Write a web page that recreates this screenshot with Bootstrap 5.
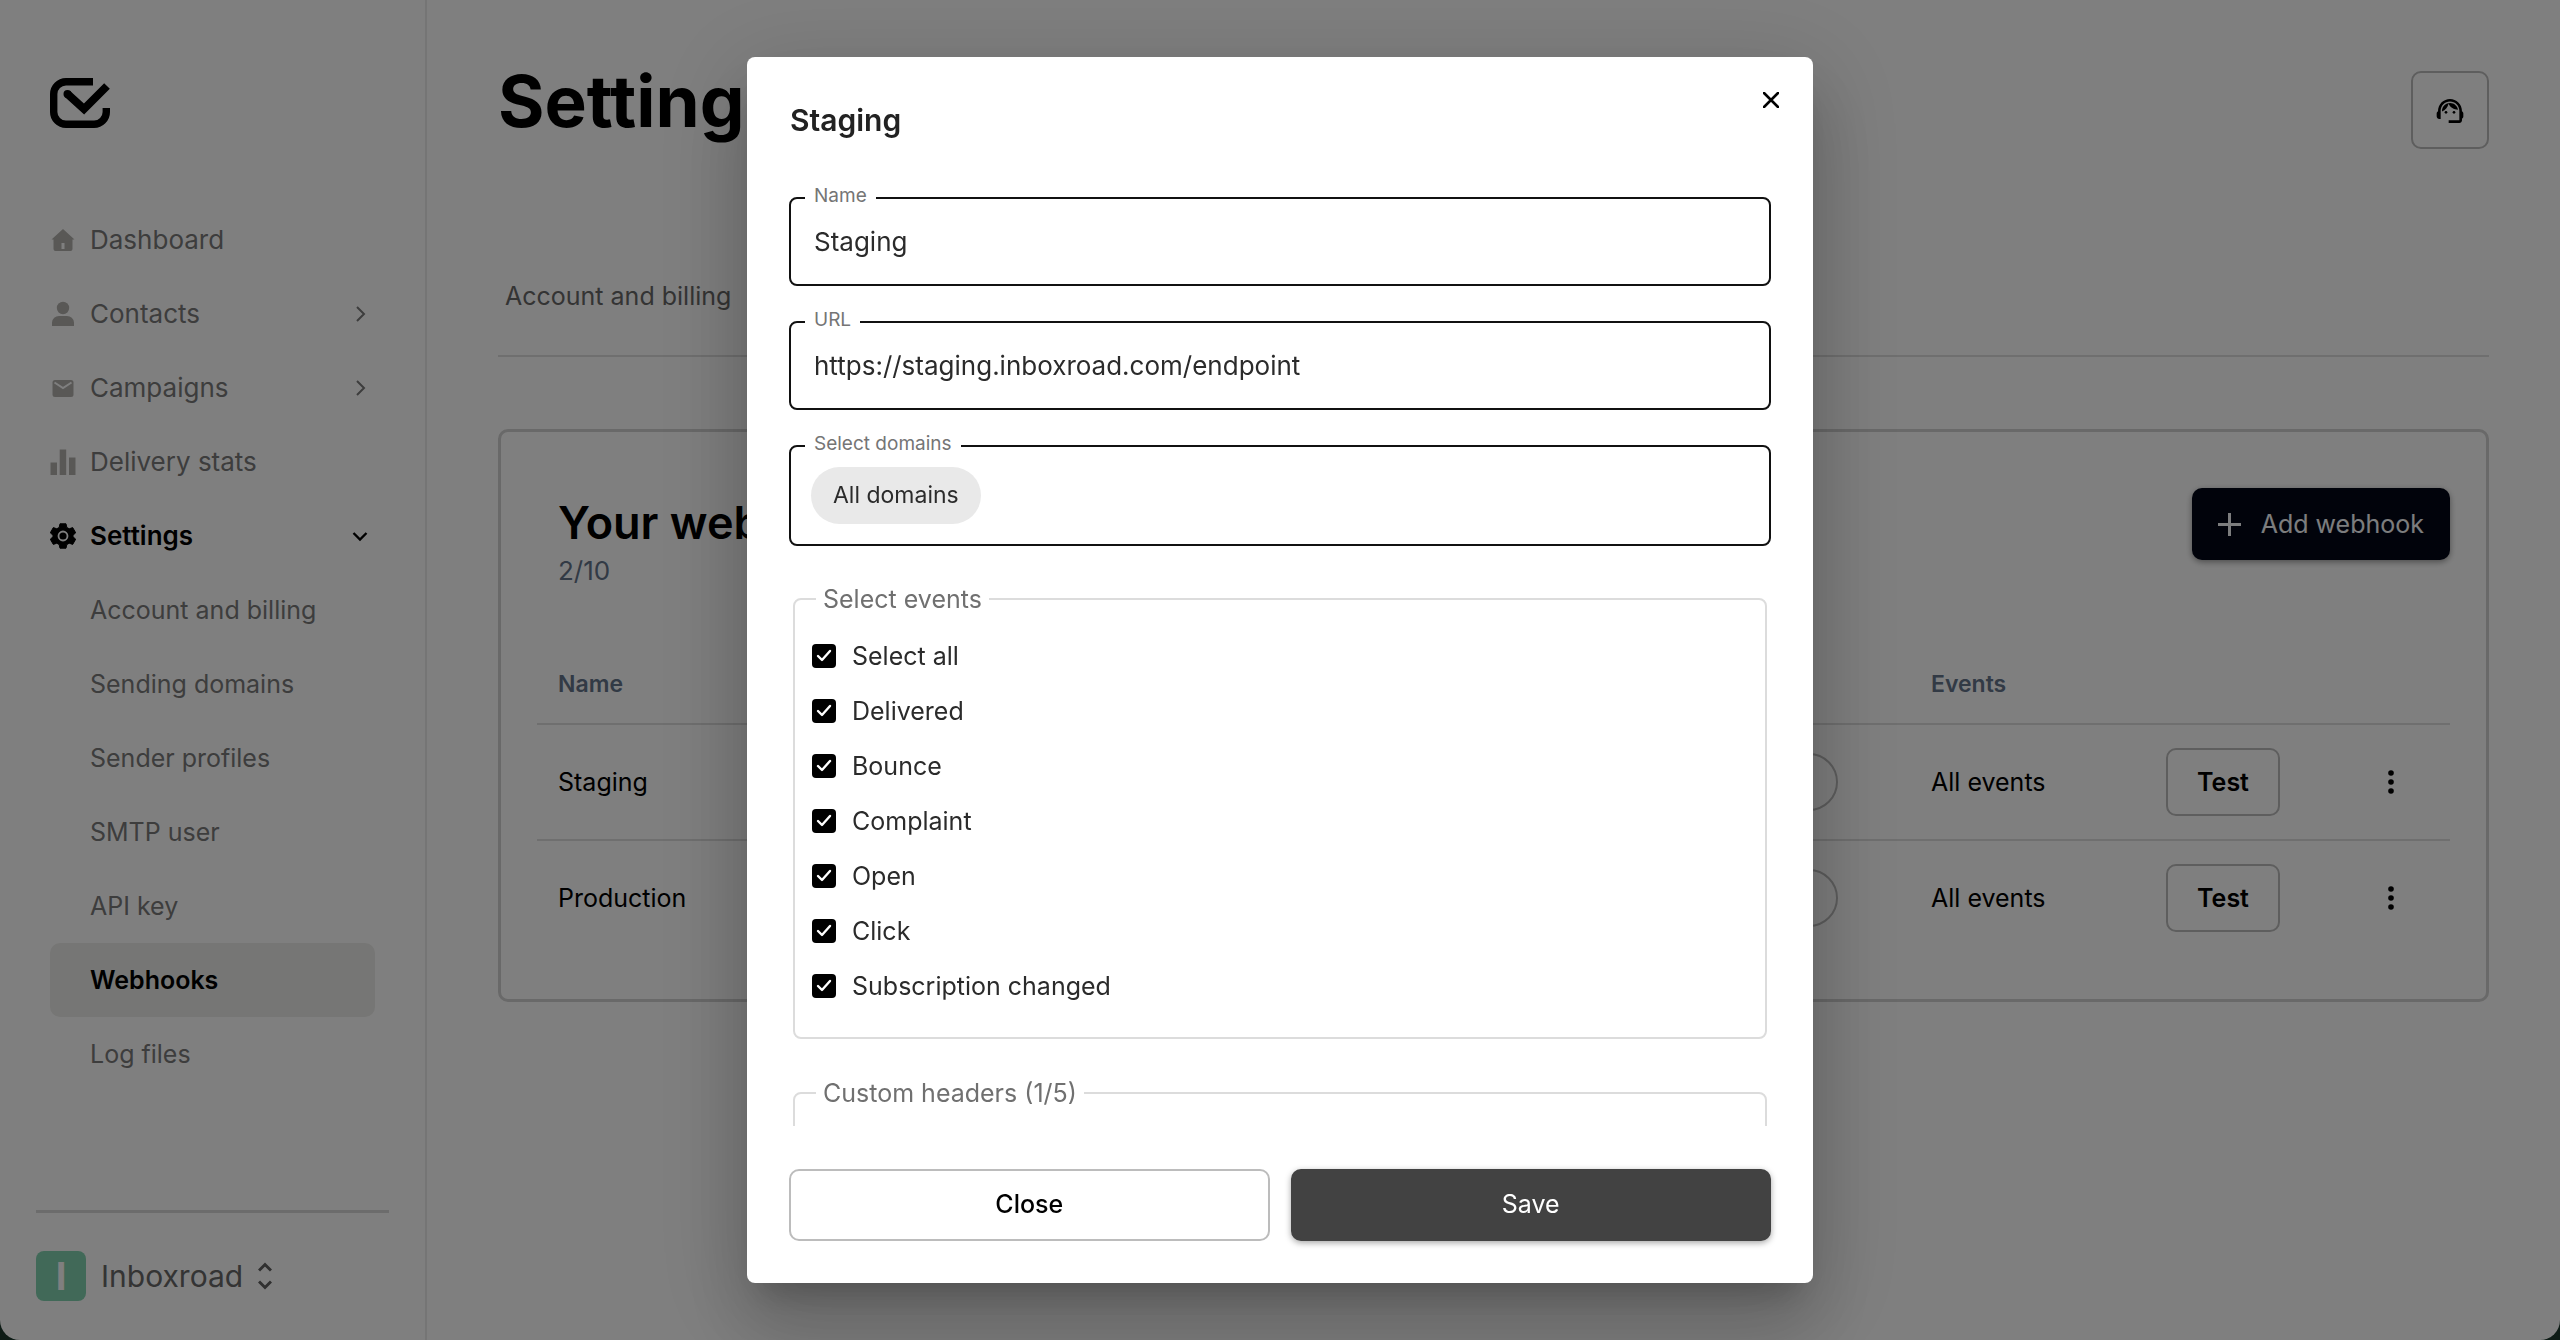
<!DOCTYPE html>
<html lang="en">
<head>
<meta charset="utf-8">
<meta name="viewport" content="width=device-width, initial-scale=1">
<title>Settings – Webhooks</title>
<link href="https://cdn.jsdelivr.net/npm/bootstrap@5.3.0/dist/css/bootstrap.min.css" rel="stylesheet">
<style>
  :root { --line: #dedede; --muted: #7a7a7a; --slate: #64748b; }
  body { font-family: Inter, "Liberation Sans", sans-serif; font-size: 25px; line-height: 32px; color: #000; background: #1c382c; }
  a { color: inherit; text-decoration: none; }
  .app-shell { background: #fff; border-radius: 0 0 20px 20px; overflow: hidden; }

  /* sidebar */
  .side-bar { width: 427px; border-right: 2px solid #ebebeb; padding: 78px 36px 39px; }
  .brand-link { margin: 0 14px 75px; line-height: 0; }
  .side-nav { margin: 0 14px; }
  .side-nav a { height: 74px; border-radius: 10px; color: var(--muted); padding-right: 7px; font-size: 26px; }
  .side-nav .ico { width: 26px; margin-right: 14px; color: #b2b1ad; flex: none; }
  .side-nav .sub-item { padding-left: 40px; font-size: 25px; }
  .side-nav .is-open { color: #000; font-weight: 600; }
  .side-nav .is-open .ico { color: #000; }
  .side-nav .sub-item.is-current { background: #ededea; color: #000; font-weight: 600; }
  .account-switch { border: 0; border-top: 3px solid #d8d8d8; padding: 38px 0 0; background: none; color: #686868; font-size: 30px; line-height: 50px; gap: 15px; }
  .avatar-tile { width: 50px; height: 50px; border-radius: 8px; background: #82d2b0; color: #fff; font-size: 38px; font-weight: 700; text-align: center; }

  /* page */
  .page-area { padding: 71px 71px 60px; }
  .page-title { font-size: 71px; line-height: 60px; font-weight: 700; margin: 0; }
  .help-btn { width: 78px; height: 78px; border: 2px solid #bcbcbc; border-radius: 10px; background: none; padding: 0; color: #000; }
  .tab-row { margin-top: 91px; height: 117px; border-bottom: 2px solid var(--line); padding: 40px 7px 0; color: #686868; gap: 40px; white-space: nowrap; }
  .hook-card { margin-top: 72px; border: 3px solid #d2d2d2; border-radius: 10px; padding: 56px 36px 42px; }
  .hook-head { margin-left: 21px; }
  .hook-title { font-size: 45px; line-height: 70px; font-weight: 600; margin: 0; }
  .hook-count { font-size: 26px; line-height: 26px; color: var(--slate); margin: 0; }
  .add-btn { height: 72px; border: 0; border-radius: 10px; background: #020617; color: #f8fafc; padding: 0 26px; gap: 20px; box-shadow: 0 2px 6px rgba(0,0,0,.4); }
  .hook-table { margin-top: 61px; width: 100%; table-layout: fixed; }
  .hook-table th { height: 79px; padding: 0 21px; font-size: 23px; font-weight: 600; color: var(--slate); border-bottom: 2px solid var(--line); }
  .hook-table td { height: 116px; padding: 0 21px; border-bottom: 2px solid var(--line); }
  .hook-table tr:last-child td { border-bottom-color: transparent; }
  .col-domain { width: 273px; } .col-event { width: 235px; } .col-test { width: 204px; } .col-more { width: 101px; }
  .pill { display: inline-block; border: 2px solid #bcbcbc; border-radius: 29px; padding: 11px 25px; font-size: 23px; white-space: nowrap; }
  .test-btn { width: 114px; height: 68px; border: 2px solid #bcbcbc; border-radius: 10px; background: none; font-weight: 600; color: #000; padding: 0; }
  .more-btn { display: block; border: 0; background: none; padding: 0; width: 42px; line-height: 0; }

  /* dialog */
  .modal-backdrop.show { opacity: .5; }
  .hook-modal { max-width: 1066px; margin: 57px auto; height: calc(100vh - 114px); }
  .hook-modal .modal-content { height: 100%; border: 0; border-radius: 8px; color: #2b2b2b;
    box-shadow: 0 22px 30px -14px rgba(0,0,0,.2), 0 48px 76px 6px rgba(0,0,0,.14), 0 18px 92px 16px rgba(0,0,0,.12); }
  .hook-modal .modal-header { border: 0; padding: 28px 27px 42px 43px; align-items: flex-start; }
  .hook-modal .modal-title { font-size: 30px; line-height: 40px; font-weight: 600; padding-top: 15px; color: #222; }
  .x-btn { border: 0; background: none; padding: 7px; line-height: 0; }
  .hook-modal .modal-body { padding: 15px 42px 0; overflow: hidden; }
  .out-field { position: relative; margin-bottom: 35px; }
  .out-field label { position: absolute; left: 16px; top: -14px; padding: 0 9px; background: #fff; font-size: 19px; line-height: 26px; color: #757575; z-index: 1; }
  .out-field .form-control { height: 89px; border: 2px solid #111; border-radius: 8px; padding: 0 23px; font-size: 26px; color: #2b2b2b; background: #fff; }
  .out-field .domain-box { height: 101px; padding: 20px; line-height: 57px; }
  .domain-chip { display: block; appearance: none; border: 0; border-radius: 29px; height: 57px; padding: 0 22px; background: #e9e9e9; font-size: 23px; color: #2b2b2b; }
  .out-group { border: 2px solid #dcdcdc; border-radius: 8px; margin: 0 4px 36px; padding: 11px 17px 24px; }
  .out-group legend { float: none; width: auto; margin: 0 0 0 4px; padding: 0 7px; font-size: 25px; line-height: 36px; color: #707070; }
  .tick-row { height: 55px; gap: 16px; }
  .tick-row .form-check-input { width: 24px; height: 24px; margin: 0; border: 0; border-radius: 4px; flex: none; }
  .tick-row .form-check-input:checked { background: #000 url("data:image/svg+xml,%3Csvg xmlns='http://www.w3.org/2000/svg' viewBox='0 0 24 24'%3E%3Cpath d='M6 12l4 4 8-9' fill='none' stroke='%23fff' stroke-width='2.4' stroke-linecap='round' stroke-linejoin='round'/%3E%3C/svg%3E") center / 24px no-repeat; }
  .hook-modal .modal-footer { border: 0; padding: 43px 42px 42px; gap: 21px; }
  .foot-btn { flex: 1 1 0; height: 72px; margin: 0; border-radius: 10px; font-size: 25px; padding: 0; }
  .foot-close, .foot-close:hover { border: 2px solid #bcbcbc; background: #fff; color: #000; font-weight: 500; }
  .foot-save, .foot-save:hover { border: 2px solid #424242; background: #424242; color: #fff; box-shadow: 0 2px 6px rgba(0,0,0,.35); }
</style>
</head>
<body>
<div class="app-shell d-flex min-vh-100">
  <aside class="side-bar d-flex flex-column flex-shrink-0">
    <a class="brand-link" href="#" aria-label="Home">
      <svg width="60" height="50" viewBox="0 0 60 50" fill="none" stroke="#000"><path d="M43 3.7H16A12.300 12.300 0 0 0 3.700 16V34A12.300 12.300 0 0 0 16 46.300H44A12.300 12.300 0 0 0 56.300 34V30" stroke-width="7.400"/><path d="M17.500 16L34 31L57 8" stroke-width="8"/><circle cx="17.500" cy="16" r="4" fill="#000" stroke="none"/></svg>
    </a>
    <nav class="side-nav d-flex flex-column">
      <a class="d-flex align-items-center" href="#"><svg class="ico" height="26" viewBox="0 0 26 26" fill="currentColor"><path d="M13 2L24.500 12.500H22.500V22a2 2 0 0 1-2 2H5.500a2 2 0 0 1-2-2V12.500H1.500zM11.500 16v6h3v-6z"/></svg>Dashboard</a>
      <a class="d-flex align-items-center" href="#"><svg class="ico" height="26" viewBox="0 0 26 26" fill="currentColor"><circle cx="13" cy="7" r="6.200"/><path d="M2 25v-3.500a7 7 0 0 1 7-6.500h8a7 7 0 0 1 7 6.500V25z"/></svg>Contacts<svg class="ms-auto" width="16" height="16" viewBox="0 0 16 16" fill="none" stroke="currentColor" stroke-width="2"><path d="M5 1l7 7-7 7"/></svg></a>
      <a class="d-flex align-items-center" href="#"><svg class="ico" height="26" viewBox="0 0 26 26"><rect x="2.500" y="5" width="21" height="17" rx="2.500" fill="currentColor"/><path d="M4.500 7.500L13 13l8.500-5.500" fill="none" stroke="#fff" stroke-width="2"/></svg>Campaigns<svg class="ms-auto" width="16" height="16" viewBox="0 0 16 16" fill="none" stroke="currentColor" stroke-width="2"><path d="M5 1l7 7-7 7"/></svg></a>
      <a class="d-flex align-items-center" href="#"><svg class="ico" height="26" viewBox="0 0 26 26" fill="currentColor"><path d="M.5 13.500h6.500V26H.5zM9.700.5h6.500V26H9.700zM19 8.500h6.500V26H19z"/></svg>Delivery stats</a>
      <a class="is-open d-flex align-items-center" href="#"><svg class="ico" height="26" viewBox="0 0 26 26"><path d="M10 .8h6l.8 3.600 2.400 1.400 3.500-1.200 3 5.200-2.700 2.400v1.600l2.700 2.400-3 5.200-3.500-1.200-2.400 1.400-.8 3.600h-6l-.8-3.600-2.400-1.400-3.500 1.200-3-5.200L3 13.800v-1.600L.3 9.800l3-5.200 3.500 1.200 2.400-1.400z" fill="currentColor" stroke="currentColor" stroke-linejoin="round"/><circle cx="13" cy="13" r="4.500" fill="none" stroke="#fff" stroke-width="1.800"/></svg>Settings<svg class="ms-auto" width="16" height="16" viewBox="0 0 16 16" fill="none" stroke="currentColor" stroke-width="2.400"><path d="M1.500 5L8 11.500 14.500 5"/></svg></a>
      <a class="sub-item d-flex align-items-center" href="#">Account and billing</a>
      <a class="sub-item d-flex align-items-center" href="#">Sending domains</a>
      <a class="sub-item d-flex align-items-center" href="#">Sender profiles</a>
      <a class="sub-item d-flex align-items-center" href="#">SMTP user</a>
      <a class="sub-item d-flex align-items-center" href="#">API key</a>
      <a class="sub-item is-current d-flex align-items-center" href="#" aria-current="page">Webhooks</a>
      <a class="sub-item d-flex align-items-center" href="#">Log files</a>
    </nav>
    <button type="button" class="account-switch d-flex align-items-center mt-auto">
      <span class="avatar-tile">I</span><span>Inboxroad</span>
      <svg width="14" height="28" viewBox="0 0 14 28" fill="none" stroke="#606060" stroke-width="3"><path d="M1 8.500L7 2.500l6 6M1 19.500l6 6 6-6"/></svg>
    </button>
  </aside>

  <main class="page-area flex-grow-1">
    <header class="d-flex justify-content-between align-items-start">
      <h1 class="page-title">Settings</h1>
      <button type="button" class="help-btn" aria-label="Support">
        <svg width="32" height="32" viewBox="0 0 24 24" fill="currentColor"><path d="M21 12.220C21 6.730 16.740 3 12 3c-4.690 0-9 3.650-9 9.280-.600.340-1 .980-1 1.720v2c0 1.100.900 2 2 2h1v-6.100c0-3.870 3.130-7 7-7s7 3.130 7 7V19h-8v2h8c1.100 0 2-.900 2-2v-1.220c.590-.310 1-.920 1-1.640v-2.300c0-.700-.410-1.310-1-1.620z"/><circle cx="9" cy="13" r="1"/><circle cx="15" cy="13" r="1"/><path d="M18 11.030C17.520 8.180 15.040 6 12.050 6c-3.030 0-6.290 2.510-6.030 6.450 2.470-1.010 4.330-3.210 4.860-5.890 1.310 2.630 4 4.440 7.120 4.470z"/></svg>
      </button>
    </header>
    <nav class="tab-row d-flex">
      <a href="#">Account and billing</a><a href="#">Sending domains</a><a href="#">Sender profiles</a><a href="#">Webhooks</a>
    </nav>
    <section class="hook-card">
      <div class="d-flex justify-content-between align-items-start">
        <div class="hook-head">
          <h2 class="hook-title">Your webhooks</h2>
          <p class="hook-count">2/10</p>
        </div>
        <button type="button" class="add-btn d-flex align-items-center"><svg width="23" height="23" viewBox="0 0 23 23" stroke="currentColor" stroke-width="3"><path d="M11.500 0v23M0 11.500h23"/></svg>Add webhook</button>
      </div>
      <table class="hook-table">
        <colgroup><col><col><col class="col-domain"><col class="col-event"><col class="col-test"><col class="col-more"></colgroup>
        <thead><tr><th>Name</th><th>URL</th><th>Domains</th><th>Events</th><th></th><th></th></tr></thead>
        <tbody>
          <tr><td>Staging</td><td></td><td><span class="pill">All domains</span></td><td>All events</td><td><button type="button" class="test-btn">Test</button></td><td><button type="button" class="more-btn" aria-label="More"><svg width="8" height="24" viewBox="0 0 8 24"><circle cx="4" cy="3" r="2.800"/><circle cx="4" cy="12" r="2.800"/><circle cx="4" cy="21" r="2.800"/></svg></button></td></tr>
          <tr><td>Production</td><td></td><td><span class="pill">All domains</span></td><td>All events</td><td><button type="button" class="test-btn">Test</button></td><td><button type="button" class="more-btn" aria-label="More"><svg width="8" height="24" viewBox="0 0 8 24"><circle cx="4" cy="3" r="2.800"/><circle cx="4" cy="12" r="2.800"/><circle cx="4" cy="21" r="2.800"/></svg></button></td></tr>
        </tbody>
      </table>
    </section>
  </main>
</div>

<div class="modal-backdrop show"></div>
<div class="modal d-block overflow-hidden" tabindex="-1" role="dialog" aria-modal="true" aria-labelledby="dlgTitle">
  <div class="modal-dialog hook-modal">
    <form class="modal-content">
      <div class="modal-header">
        <h2 class="modal-title" id="dlgTitle">Staging</h2>
        <button type="button" class="x-btn" aria-label="Close dialog"><svg width="16" height="16" viewBox="0 0 16 16" stroke="#000" stroke-width="2.600" stroke-linecap="round"><path d="M1 1l14 14M15 1L1 15"/></svg></button>
      </div>
      <div class="modal-body">
        <div class="out-field"><label for="fName">Name</label><input id="fName" class="form-control" type="text" value="Staging"></div>
        <div class="out-field"><label for="fUrl">URL</label><input id="fUrl" class="form-control" type="text" value="https://staging.inboxroad.com/endpoint"></div>
        <div class="out-field"><label for="fDom">Select domains</label><div class="form-control domain-box"><select id="fDom" class="domain-chip"><option>All domains</option></select></div></div>
        <fieldset class="out-group">
          <legend>Select events</legend>
          <div class="tick-row d-flex align-items-center"><input class="form-check-input" type="checkbox" id="e1" checked><label for="e1">Select all</label></div>
          <div class="tick-row d-flex align-items-center"><input class="form-check-input" type="checkbox" id="e2" checked><label for="e2">Delivered</label></div>
          <div class="tick-row d-flex align-items-center"><input class="form-check-input" type="checkbox" id="e3" checked><label for="e3">Bounce</label></div>
          <div class="tick-row d-flex align-items-center"><input class="form-check-input" type="checkbox" id="e4" checked><label for="e4">Complaint</label></div>
          <div class="tick-row d-flex align-items-center"><input class="form-check-input" type="checkbox" id="e5" checked><label for="e5">Open</label></div>
          <div class="tick-row d-flex align-items-center"><input class="form-check-input" type="checkbox" id="e6" checked><label for="e6">Click</label></div>
          <div class="tick-row d-flex align-items-center"><input class="form-check-input" type="checkbox" id="e7" checked><label for="e7">Subscription changed</label></div>
        </fieldset>
        <fieldset class="out-group">
          <legend>Custom headers (1/5)</legend>
          <div class="tick-row"></div>
        </fieldset>
      </div>
      <div class="modal-footer flex-nowrap">
        <button type="button" class="btn foot-btn foot-close">Close</button>
        <button type="submit" class="btn foot-btn foot-save">Save</button>
      </div>
    </form>
  </div>
</div>
<script src="https://cdn.jsdelivr.net/npm/bootstrap@5.3.0/dist/js/bootstrap.bundle.min.js"></script>
</body>
</html>
